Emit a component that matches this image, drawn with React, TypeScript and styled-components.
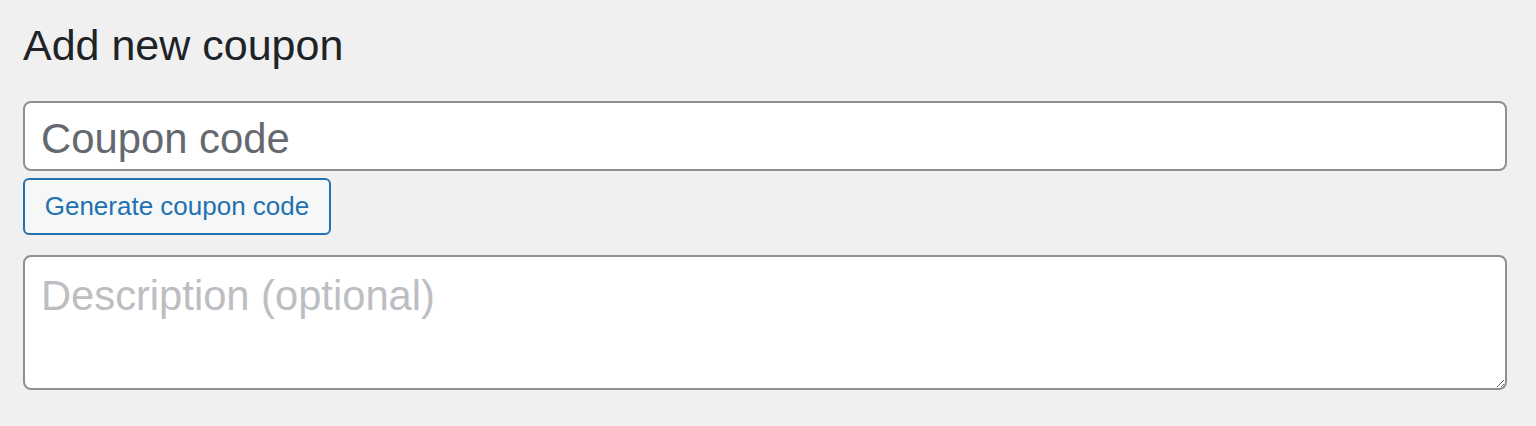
import React, { useState } from 'react';
import styled, { createGlobalStyle } from 'styled-components';

const GlobalStyle = createGlobalStyle`
  html, body {
    margin: 0;
    padding: 0;
    background-color: #f0f0f1;
  }
  body {
    font-family: "Liberation Sans", Arial, sans-serif;
  }
`;

const App = () => {
  const [code, setCode] = useState<string>('');
  const [description, setDescription] = useState<string>('');

  const handleGenerate: React.MouseEventHandler<HTMLButtonElement> = (e) => {
    e.preventDefault();
    const chars = 'abcdefghjkmnpqrstuvwxyz23456789';
    let next = '';
    for (let i = 0; i < 8; i++) {
      next += chars[Math.floor(Math.random() * chars.length)];
    }
    setCode(next);
  };

  return (
    <>
      <GlobalStyle />
      <Page>
        <Title>Add new coupon</Title>
        <CouponForm>
          <CodeInput
            type='text'
            placeholder='Coupon code'
            value={code}
            onChange={(e) => setCode(e.target.value)}
          />
          <GenerateButton type='button' onClick={handleGenerate}>
            Generate coupon code
          </GenerateButton>
          <DescriptionInput
            placeholder='Description (optional)'
            value={description}
            onChange={(e) => setDescription(e.target.value)}
          />
        </CouponForm>
      </Page>
    </>
  );
};
export default App;

const Page = styled.div`
  padding: 17px 29px 0 23px;
`;

const Title = styled.h1`
  margin: 0;
  font-size: 43px;
  line-height: 56px;
  font-weight: 400;
  color: #1d2327;
`;

const CouponForm = styled.form`
  display: flex;
  flex-direction: column;
  align-items: flex-start;
  margin-top: 28px;
`;

const CodeInput = styled.input`
  box-sizing: border-box;
  width: 100%;
  height: 70px;
  margin: 0;
  padding: 6px 16px 0;
  border: 2px solid #8c8f94;
  border-radius: 8px;
  background-color: #fff;
  font-family: "Liberation Sans", Arial, sans-serif;
  font-size: 41.8px;
  color: #2c3338;
  outline: none;

  &::placeholder {
    color: #646970;
    opacity: 1;
  }
`;

const GenerateButton = styled.button`
  box-sizing: border-box;
  margin-top: 7px;
  width: 308px;
  height: 57px;
  padding: 0 17px;
  border: 2px solid #2271b1;
  border-radius: 6px;
  background-color: #f6f7f7;
  color: #2271b1;
  font-family: "Liberation Sans", Arial, sans-serif;
  font-size: 26px;
  cursor: pointer;
`;

const DescriptionInput = styled.textarea`
  box-sizing: border-box;
  width: 100%;
  height: 135px;
  margin: 20px 0 0;
  padding: 12px 16px;
  border: 2px solid #8c8f94;
  border-radius: 8px;
  background-color: #fff;
  font-family: "Liberation Sans", Arial, sans-serif;
  font-size: 41.7px;
  line-height: 53px;
  color: #2c3338;
  outline: none;

  &::placeholder {
    color: #bdbec1;
    opacity: 1;
  }
`;
